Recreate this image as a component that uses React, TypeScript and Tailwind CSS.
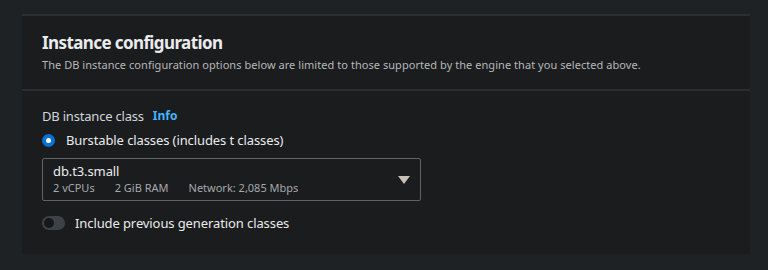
export default function App() {
  return (
    <div
      className="h-[270px] w-[768px] overflow-hidden bg-[#1f2224] pt-[14px] pl-[22px]"
      style={{ fontFamily: '"Noto Sans", "Open Sans", sans-serif' }}
    >
      <div className="w-[728px] border-t-2 border-[#2b2e30] bg-[#1b1c1e]">
        {/* header */}
        <div className="border-b-2 border-[#2b2e30] px-5 pt-[16px] pb-[17px]">
          <h2 className="text-[17px] leading-[22px] font-bold tracking-[-0.6px] text-[#e9ebed]">
            Instance configuration
          </h2>
          <p className="mt-[4px] text-[11px] leading-[14px] tracking-[0.05px] text-[#b4b8bb]">
            The DB instance configuration options below are limited to those supported by the engine
            that you selected above.
          </p>
        </div>

        {/* body */}
        <div className="px-5 pt-[16px] pb-[22px]">
          <div className="flex items-center gap-[9px] text-[13px] leading-[18px] text-[#d1d5db]">
            <span className="tracking-[-0.2px]">DB instance class</span>
            <span className="text-[12px] font-bold text-[#42b4ff]">Info</span>
          </div>

          <div className="mt-[6px] flex items-center gap-[11px]">
            <span className="flex h-[13px] w-[13px] items-center justify-center rounded-full bg-[#0972d3]">
              <span className="h-[5px] w-[5px] rounded-full bg-white" />
            </span>
            <span className="text-[13px] leading-[18px] tracking-[-0.1px] text-[#e9ebed]">
              Burstable classes (includes t classes)
            </span>
          </div>

          <div className="mt-[9px] flex h-[43px] w-[379px] items-center justify-between rounded-[2px] border border-[#5f6368] pr-[10px] pl-[10px]">
            <div>
              <div className="text-[13px] leading-[17px] tracking-[-0.1px] text-[#e9ebed]">db.t3.small</div>
              <div className="flex gap-[20px] text-[11px] leading-[16px] text-[#a5a9ad]">
                <span>2 vCPUs</span>
                <span>2 GiB RAM</span>
                <span>Network: 2,085 Mbps</span>
              </div>
            </div>
            <svg width="12" height="8" viewBox="0 0 12 8">
              <path d="M0 0 H12 L6 8 Z" fill="#c6c0b6" />
            </svg>
          </div>

          <div className="mt-[13px] flex items-center gap-[10px]">
            <span className="flex h-[14px] w-[23px] items-center rounded-full bg-[#3e4246] pl-[2px]">
              <span className="h-[10px] w-[10px] rounded-full bg-[#16191b]" />
            </span>
            <span className="text-[13px] leading-[18px] tracking-[-0.1px] text-[#e9ebed]">
              Include previous generation classes
            </span>
          </div>
        </div>
      </div>
    </div>
  );
}
